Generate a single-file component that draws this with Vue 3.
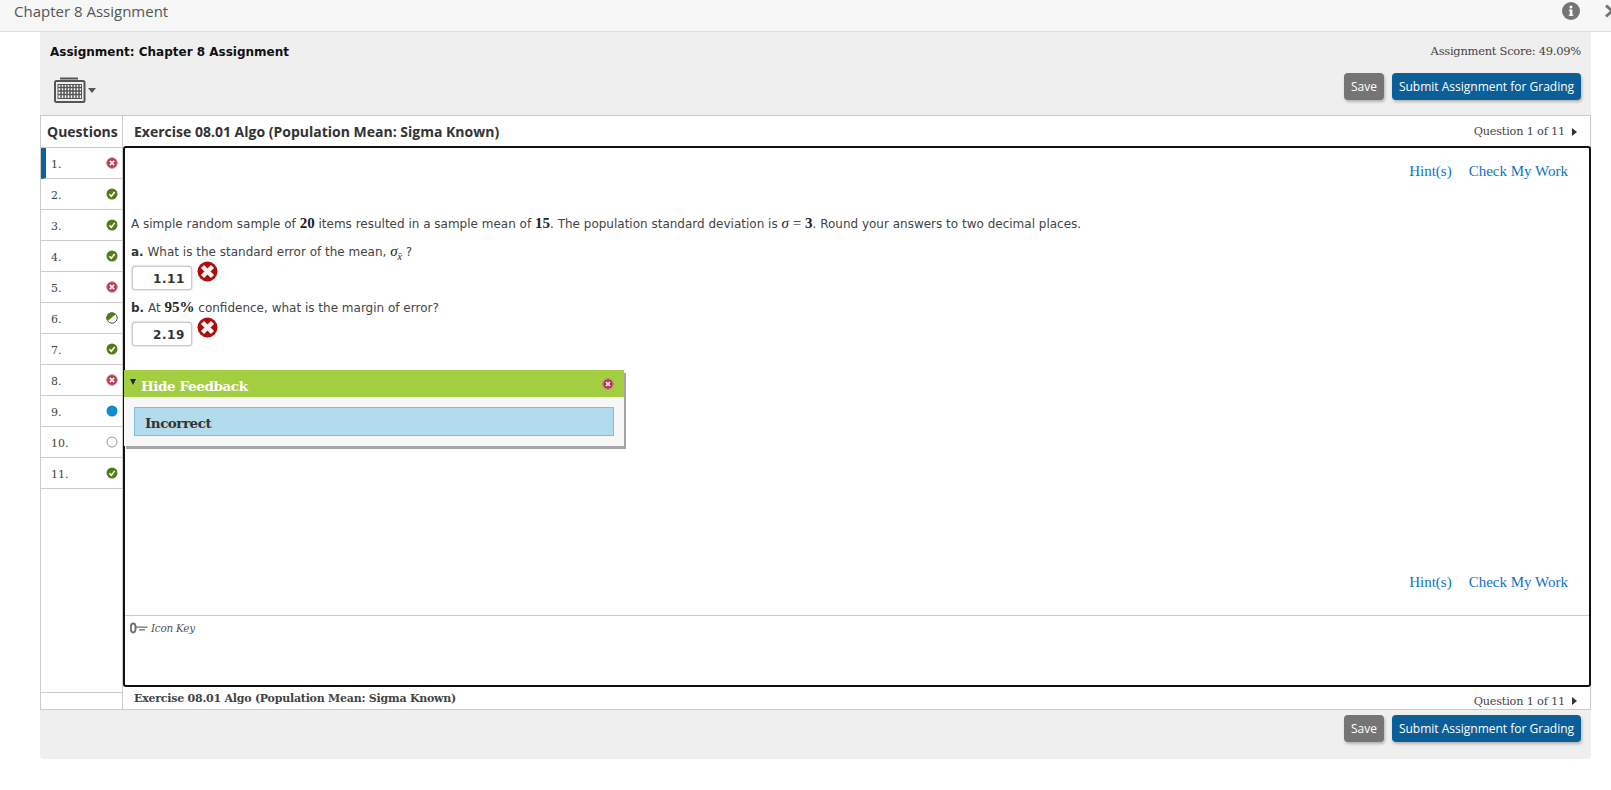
<script setup>
const rows = [
  { n: 1, s: 'x' }, { n: 2, s: 'c' }, { n: 3, s: 'c' }, { n: 4, s: 'c' }, { n: 5, s: 'x' }, { n: 6, s: 'p' },
  { n: 7, s: 'c' }, { n: 8, s: 'x' }, { n: 9, s: 'b' }, { n: 10, s: 'e' }, { n: 11, s: 'c' }
]
</script>

<template>
  <div class="page">
    <header class="topbar">
      <span class="title">Chapter 8 Assignment</span>
      <div class="top-icons">
        <svg class="info" width="18" height="18" viewBox="0 0 18 18">
          <circle cx="9" cy="9" r="9" fill="#757575" />
          <rect x="7.8" y="7.6" width="2.6" height="6" fill="#fff" />
          <rect x="6.8" y="7.6" width="2" height="1.1" fill="#fff" />
          <rect x="6.8" y="12.7" width="4.6" height="1.1" fill="#fff" />
          <circle cx="9" cy="5" r="1.5" fill="#fff" />
        </svg>
        <svg class="chev" width="8" height="16" viewBox="0 0 8 16">
          <path d="M1 2.5 L7 8 L1 13.5" fill="none" stroke="#757575" stroke-width="3" />
        </svg>
      </div>
    </header>

    <main class="panel">
      <section class="panel-head">
        <div class="head-row">
          <strong class="assign">Assignment: Chapter 8 Assignment</strong>
          <span class="score">Assignment Score: 49.09%</span>
        </div>
        <div class="tool-row">
          <div class="kbd">
            <svg width="32" height="26" viewBox="0 0 32 26">
              <rect x="6" y="0.5" width="18" height="2" fill="#555" />
              <rect x="1" y="4" width="29.5" height="21" rx="1.5" fill="none" stroke="#555" stroke-width="2" />
              <rect x="4" y="7.5" width="23.5" height="14" fill="#fff" stroke="#555" stroke-width="1" />
              <path d="M4 10.5h23.5M4 14h23.5M4 17.5h23.5" stroke="#555" stroke-width="1.6" />
              <path d="M7 7.5v14M10 7.5v14M13 7.5v14M16 7.5v14M19 7.5v14M22 7.5v14M25 7.5v14" stroke="#555" stroke-width="1.5" />
            </svg>
            <span class="caret"></span>
          </div>
          <div class="btns">
            <button class="btn save">Save</button>
            <button class="btn submit">Submit Assignment for Grading</button>
          </div>
        </div>
      </section>

      <section class="table">
        <aside class="side">
          <div class="side-head">Questions</div>
          <div v-for="r in rows" :key="r.n" class="q-row" :class="{ active: r.n === 1 }">
            <span class="num">{{ r.n }}.</span>
            <svg width="12" height="12" viewBox="0 0 12 12">
              <template v-if="r.s === 'x'">
                <circle cx="6" cy="6" r="5.3" fill="#c8324f" stroke="#a99" stroke-width="1" />
                <path d="M3.9 3.9 L8.1 8.1 M8.1 3.9 L3.9 8.1" stroke="#fff" stroke-width="1.7" />
              </template>
              <template v-else-if="r.s === 'c'">
                <circle cx="6" cy="6" r="5.5" fill="#4f7f12" />
                <path d="M3.4 6.2 L5.3 8.2 L8.7 4" fill="none" stroke="#fff" stroke-width="1.6" />
              </template>
              <template v-else-if="r.s === 'p'">
                <circle cx="6" cy="6" r="5.2" fill="#fff" stroke="#555" stroke-width="1" />
                <path d="M1.6 9 A5.2 5.2 0 0 1 9.7 2.3 Z" fill="#4f7f12" />
              </template>
              <circle v-else-if="r.s === 'b'" cx="6" cy="6" r="5.5" fill="#0d8ed0" />
              <circle v-else cx="6" cy="6" r="5" fill="#fff" stroke="#999" stroke-width="1" />
            </svg>
          </div>
          <div class="side-fill"></div>
          <div class="side-foot"></div>
        </aside>

        <div class="main">
          <div class="ex-head">
            <h2>Exercise 08.01 Algo (Population Mean: Sigma Known)</h2>
            <span class="qnav">Question 1 of 11 <i class="tri"></i></span>
          </div>

          <div class="box">
            <div class="links top"><a>Hint(s)</a><a>Check My Work</a></div>
            <div class="question">
              <p class="q-line">A simple random sample of <b class="m">20</b> items resulted in a sample mean of <b class="m">15</b>. The population standard deviation is <i class="m sig">σ</i> <span class="m">=</span> <b class="m">3</b>. Round your answers to two decimal places.</p>
              <p class="q-a"><b>a.</b> What is the standard error of the mean, <i class="m sig">σ<sub>x̄</sub></i> ?</p>
              <div class="answer">
                <span class="input">1.11</span>
                <svg class="err" width="21" height="21" viewBox="0 0 21 21">
                  <circle cx="10.5" cy="10.5" r="10" fill="#a80f0f" />
                  <path d="M5.5 5.5 L15.5 15.5 M15.5 5.5 L5.5 15.5" stroke="#f6f2f2" stroke-width="4.4" />
                </svg>
              </div>
              <p class="q-b"><b>b.</b> At <b class="m">95%</b> confidence, what is the margin of error?</p>
              <div class="answer">
                <span class="input">2.19</span>
                <svg class="err" width="21" height="21" viewBox="0 0 21 21">
                  <circle cx="10.5" cy="10.5" r="10" fill="#a80f0f" />
                  <path d="M5.5 5.5 L15.5 15.5 M15.5 5.5 L5.5 15.5" stroke="#f6f2f2" stroke-width="4.4" />
                </svg>
              </div>
            </div>

            <div class="feedback">
              <div class="fb-head">
                <span class="fb-tri"></span>
                <span class="fb-title">Hide Feedback</span>
                <svg class="fb-close" width="12" height="12" viewBox="0 0 12 12">
                  <circle cx="6" cy="6" r="5.3" fill="#c8324f" stroke="#a99" stroke-width="1" />
                  <path d="M4 4 L8 8 M8 4 L4 8" stroke="#fff" stroke-width="1.6" />
                </svg>
              </div>
              <div class="fb-body"><div class="fb-msg">Incorrect</div></div>
            </div>

            <div class="links bottom"><a>Hint(s)</a><a>Check My Work</a></div>
            <div class="key">
              <svg width="18" height="12" viewBox="0 0 18 12">
                <ellipse cx="3.2" cy="6" rx="2.4" ry="4.4" fill="none" stroke="#707070" stroke-width="2" />
                <path d="M6 5.2h11.5M9 7.8h6" stroke="#707070" stroke-width="1.3" />
              </svg>
              <em>Icon Key</em>
            </div>
          </div>

          <div class="ex-foot">
            <h3>Exercise 08.01 Algo (Population Mean: Sigma Known)</h3>
            <span class="qnav">Question 1 of 11 <i class="tri"></i></span>
          </div>
        </div>
      </section>

      <section class="panel-foot">
        <button class="btn save">Save</button>
        <button class="btn submit">Submit Assignment for Grading</button>
      </section>
    </main>
  </div>
</template>

<style scoped>
.page { width: 1611px; height: 790px; overflow: hidden; background: #fff; font-family: "DejaVu Sans", sans-serif; color: #444; }
.topbar { height: 31px; background: #f7f7f7; border-bottom: 1px solid #ddd; display: flex; align-items: center; justify-content: space-between; padding-left: 14px; }
.title { font: 15px "Open Sans", sans-serif; color: #555; margin-top: -9px; }
.top-icons { display: flex; align-items: center; gap: 25px; margin-top: -10px; margin-right: -1px; }
.chev { margin-right: -1px; }
.panel { width: 1551px; margin-left: 40px; }
.panel-head { height: 83px; background: #efefef; box-sizing: border-box; padding: 0 10px; }
.head-row { display: flex; justify-content: space-between; align-items: center; height: 40px; }
.assign { font: bold 12px "DejaVu Sans", sans-serif; color: #111; }
.score { font: 11.5px "DejaVu Serif", serif; color: #444; letter-spacing: -0.27px; margin-top: -3px; }
.tool-row { display: flex; justify-content: space-between; align-items: flex-start; }
.kbd { display: flex; align-items: center; padding-left: 4px; margin-top: 5px; gap: 2px; }
.caret { border: 4px solid transparent; border-top: 5px solid #555; border-bottom: 0; }
.btns { display: flex; gap: 8px; margin-top: 1px; }
.btn { height: 27px; border: 0; border-radius: 4px; color: #fff; font: 12px "Open Sans", sans-serif; padding: 0; box-shadow: 1px 2px 3px rgba(0,0,0,.25); }
.save { width: 40px; background: #757575; }
.submit { width: 189px; background: #0b5f99; }
.table { display: flex; height: 595px; border-top: 1px solid #ccc; border-bottom: 1px solid #ccc; border-right: 1px solid #ccc; box-sizing: border-box; }
.side { width: 83px; flex: none; display: flex; flex-direction: column; border-left: 1px solid #ccc; border-right: 1px solid #ccc; box-sizing: border-box; }
.side-head { height: 31px; flex: none; font: 700 14px "Open Sans", sans-serif; color: #333; display: flex; align-items: center; padding-left: 6px; border-bottom: 1px solid #ccc; white-space: nowrap; }
.q-row { height: 30px; flex: none; border-bottom: 1px solid #ccc; display: flex; align-items: center; justify-content: space-between; padding: 0 4px 0 10px; }
.q-row.active { border-left: 5px solid #0b6299; padding-left: 5px; }
.num { font: 11px "DejaVu Serif", serif; color: #444; position: relative; top: 1px; }
.side-fill { flex: 1; border-bottom: 1px solid #ccc; }
.side-foot { height: 16px; flex: none; }
.main { flex: 1; min-width: 0; display: flex; flex-direction: column; }
.ex-head { height: 30px; flex: none; display: flex; justify-content: space-between; align-items: center; padding: 1px 13px 0 11px; box-sizing: border-box; }
.ex-head h2 { margin: 0; font: 700 14px "Open Sans", sans-serif; color: #333; }
.qnav { font: 11.3px "DejaVu Serif", serif; color: #444; letter-spacing: -0.2px; display: inline-flex; align-items: center; gap: 7px; white-space: nowrap; }
.tri { display: inline-block; border: 4px solid transparent; border-left: 5px solid #333; border-right: 0; }
.box { height: 541px; flex: none; border: 2px solid #111; border-radius: 3px; box-sizing: border-box; margin-right: -1px; display: flex; flex-direction: column; background: #fff; position: relative; }
.links { display: flex; justify-content: flex-end; gap: 17px; padding-right: 21px; font: 15px "Liberation Serif", serif; color: #0e73c4; }
.links.top { margin-top: 14px; height: 18px; align-items: center; }
.links.bottom { margin-top: auto; height: 18px; align-items: center; margin-bottom: 24px; }
.question { padding: 34px 0 0 6px; font-size: 12px; line-height: 18px; color: #444; }
.question p { margin: 0; }
.q-line { height: 18px; white-space: nowrap; }
.q-a { margin-top: 10px !important; }
.q-b { margin-top: 3px !important; }
.question b:not(.m) { color: #333; }
.m { font-family: "Liberation Serif", serif; font-size: 15px; color: #222; }
.sig sub { font-size: 10px; line-height: 0; }
.answer { display: flex; align-items: flex-start; height: 29px; margin-top: 5px; gap: 5px; }
.input { width: 60px; height: 24px; box-sizing: border-box; margin-left: 1px; border: 1px solid #ccc; border-radius: 3px; box-shadow: 0 0 2px #aaa; background: #fff; text-align: right; padding-right: 6px; font: bold 12px/24px "DejaVu Sans", sans-serif; letter-spacing: 0.6px; color: #333; }
.err { margin-top: -5px; }
.feedback { width: 500px; margin-top: 19px; margin-left: -1px; box-shadow: 2px 3px 0 #a6a6a6; background: #f7f7f7; }
.fb-head { height: 27px; background: #a4ce41; display: flex; align-items: center; position: relative; padding: 4px 0 0 17px; box-sizing: border-box; }
.fb-tri { position: absolute; left: 6px; top: 9px; border: 3.5px solid transparent; border-top: 6px solid #222; border-bottom: 0; }
.fb-title { font: bold 13.5px "DejaVu Serif", serif; color: #fff; letter-spacing: -0.4px; }
.fb-close { position: absolute; right: 10px; top: 8px; }
.fb-body { padding: 10px; height: 49px; box-sizing: border-box; }
.fb-msg { height: 29px; width: 480px; box-sizing: border-box; background: #b2dbee; border: 1px solid #7fbce0; padding: 2px 0 0 10px; font: bold 13.5px/27px "DejaVu Serif", serif; color: #333; letter-spacing: -0.5px; }
.key { height: 70px; border-top: 1px solid #ccc; box-sizing: border-box; padding: 6px 0 0 5px; display: flex; align-items: flex-start; gap: 3px; }
.key em { font: italic 10.5px "DejaVu Serif", serif; color: #555; letter-spacing: -0.3px; }
.ex-foot { flex: 1; display: flex; justify-content: space-between; padding: 0 13px 0 11px; }
.ex-foot h3 { margin: 0; font: bold 11px/24px "DejaVu Serif", serif; color: #444; letter-spacing: -0.23px; }
.ex-foot .qnav { margin-top: 4px; }
.panel-foot { height: 49px; background: #efefef; border-radius: 0 0 4px 4px; display: flex; justify-content: flex-end; gap: 8px; padding: 5px 10px 0 0; box-sizing: border-box; }
</style>
